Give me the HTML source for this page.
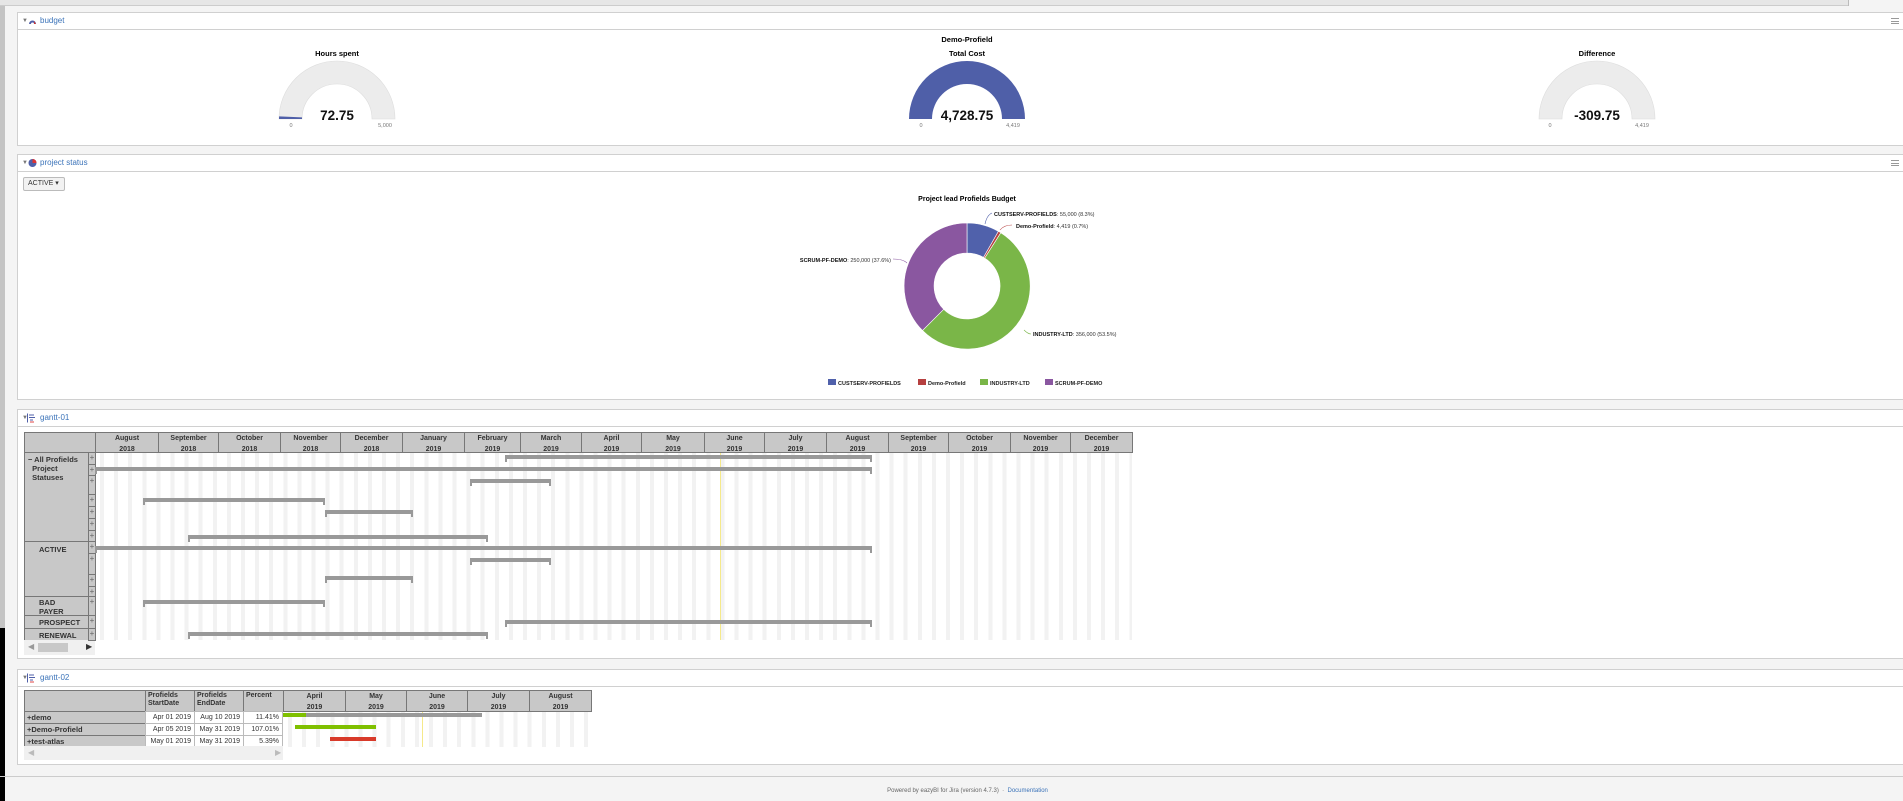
<!DOCTYPE html>
<html><head><meta charset="utf-8"><style>
*{margin:0;padding:0;box-sizing:border-box}
body{width:1903px;height:801px;overflow:hidden;background:#f4f4f4;font-family:"Liberation Sans",Arial,sans-serif;position:relative}
.a{position:absolute}
.panel{position:absolute;left:17px;width:1886px;background:#fff;border:1px solid #d0d0d0;border-right:none}
.ph{position:absolute;left:0;right:0;top:0;height:17px;border-bottom:1px solid #d0d0d0;font-size:8px;color:#3b73b9;line-height:16px;padding-left:22px}
.ph .tri{position:absolute;left:4px;top:0;color:#777;font-size:6px}
.ham{position:absolute;right:4px;top:5px;width:8px;height:6px;border-top:1px solid #999;border-bottom:1px solid #999}
.ham:after{content:"";position:absolute;left:0;right:0;top:1.5px;border-top:1px solid #999}
.hc{position:absolute;background:#c8c8c8;border:1px solid #777;font-size:7px;font-weight:bold;color:#333;text-align:center;line-height:11px}
.lc{position:absolute;background:#c8c8c8;border:1px solid #777;font-size:7.5px;font-weight:bold;color:#333;line-height:9px}
.pl{position:absolute;background:#c8c8c8;border:1px solid #777;font-size:8px;color:#666;text-align:center;line-height:10px}
.bar{position:absolute;height:4px;background:#999}
.dc{position:absolute;background:#fff;border:1px solid #bbb;font-size:7px;color:#333;text-align:right;padding-right:3px;line-height:11px}
</style></head><body>
<div class="a" style="left:0;top:0;width:1903px;height:6px;background:#e6e6e6;border-bottom:1px solid #ccc"></div>
<div class="a" style="left:1848px;top:0;width:55px;height:6px;border-left:1px solid #bbb;background:#f4f4f4"></div>
<div class="a" style="left:0;top:6px;width:5px;height:622px;background:#c4c4c4"></div>
<div class="a" style="left:0;top:628px;width:5px;height:173px;background:#000"></div>

<div class="panel" style="top:12px;height:134px">
<div class="ph"><span class="tri">▼</span><svg class="a" style="left:10px;top:4px" width="9" height="7"><path d="M1 7A3.5 3.5 0 0 1 8 7L6 7A1.5 1.5 0 0 0 3 7Z" fill="#4f5fa8"/><path d="M6 4L8 7H6Z" fill="#c33"/></svg>budget<div class="ham"></div></div>
</div>
<svg class="a" style="left:0;top:0" width="1903" height="150">
<g font-family="Liberation Sans,Arial,sans-serif" font-weight="bold" text-anchor="middle">
<text x="337" y="56" font-size="7.5">Hours spent</text>
<text x="967" y="42" font-size="7.5">Demo-Profield</text>
<text x="967" y="56" font-size="7.5">Total Cost</text>
<text x="1597" y="56" font-size="7.5">Difference</text>
</g>
<path d="M279 119A58 58 0 0 1 395 119L372 119A35 35 0 0 0 302 119Z" fill="#ececec" stroke="#ddd" stroke-width="0.6"/>
<path d="M279 119A58 58 0 0 1 279.1 116.4L302 117.4A35 35 0 0 0 302 119Z" fill="#4f5fa8"/>
<path d="M909 119A58 58 0 0 1 1025 119L1002 119A35 35 0 0 0 932 119Z" fill="#4f5fa8"/>
<path d="M1539 119A58 58 0 0 1 1655 119L1632 119A35 35 0 0 0 1562 119Z" fill="#ececec" stroke="#ddd" stroke-width="0.6"/>
<g font-family="Liberation Sans,Arial,sans-serif" font-weight="bold" text-anchor="middle" font-size="13.5" fill="#111">
<text x="337" y="120">72.75</text><text x="967" y="120">4,728.75</text><text x="1597" y="120">-309.75</text></g>
<g font-family="Liberation Sans,Arial,sans-serif" font-size="5.5" fill="#777" text-anchor="middle">
<text x="291" y="127">0</text><text x="385" y="127">5,000</text>
<text x="921" y="127">0</text><text x="1013" y="127">4,419</text>
<text x="1550" y="127">0</text><text x="1642" y="127">4,419</text></g>
</svg>

<div class="panel" style="top:154px;height:246px">
<div class="ph"><span class="tri">▼</span><svg class="a" style="left:10px;top:3px" width="9" height="10"><circle cx="4.5" cy="5" r="4" fill="#4f5fa8"/><path d="M4.5 5V1A4 4 0 0 1 8.5 5Z" fill="#d33"/></svg>project status<div class="ham"></div></div>
<div class="a" style="left:5px;top:22px;width:42px;height:14px;border:1px solid #bbb;border-radius:2px;background:#f2f2f2;font-size:7px;line-height:12px;padding-left:4px;color:#333">ACTIVE ▾</div>
</div>
<svg class="a" style="left:0;top:150px" width="1903" height="250" viewBox="0 150 1903 250">
<text x="967" y="201" font-family="Liberation Sans,Arial,sans-serif" font-weight="bold" font-size="7" text-anchor="middle">Project lead Profields Budget</text>
<path d="M967 223A63 63 0 0 1 998.4 231.4L983.5 257.4A33 33 0 0 0 967 253Z" fill="#5061ab" stroke="#fff" stroke-width=".6"/>
<path d="M998.4 231.4A63 63 0 0 1 1000.8 232.8L984.7 258.1A33 33 0 0 0 983.5 257.4Z" fill="#b64040" stroke="#fff" stroke-width=".6"/>
<path d="M1000.8 232.8A63 63 0 1 1 922.5 330.5L943.7 309.3A33 33 0 1 0 984.7 258.1Z" fill="#7ab648" stroke="#fff" stroke-width=".6"/>
<path d="M922.5 330.5A63 63 0 0 1 967 223L967 253A33 33 0 0 0 943.7 309.3Z" fill="#8a57a0" stroke="#fff" stroke-width=".6"/>
<g fill="none" stroke-width=".6"><path d="M985 224Q987 215 992 213" stroke="#5061ab"/><path d="M1000 230Q1004 225 1012 225" stroke="#b64040"/><path d="M1024 330Q1028 334 1031 334" stroke="#7ab648"/><path d="M907 263Q903 259 893 259" stroke="#8a57a0"/></g>
<g font-family="Liberation Sans,Arial,sans-serif" font-size="5.5" fill="#333">
<text x="994" y="216"><tspan font-weight="bold" fill="#111">CUSTSERV-PROFIELDS</tspan>: 55,000 (8.3%)</text>
<text x="1016" y="228"><tspan font-weight="bold" fill="#111">Demo-Profield</tspan>: 4,419 (0.7%)</text>
<text x="891" y="262" text-anchor="end"><tspan font-weight="bold" fill="#111">SCRUM-PF-DEMO</tspan>: 250,000 (37.6%)</text>
<text x="1033" y="336"><tspan font-weight="bold" fill="#111">INDUSTRY-LTD</tspan>: 356,000 (53.5%)</text>
</g>
<g font-family="Liberation Sans,Arial,sans-serif" font-size="5.5" font-weight="bold" fill="#222">
<rect x="828" y="379" width="8" height="6" fill="#5061ab"/><text x="838" y="385">CUSTSERV-PROFIELDS</text>
<rect x="918" y="379" width="8" height="6" fill="#b64040"/><text x="928" y="385">Demo-Profield</text>
<rect x="980" y="379" width="8" height="6" fill="#7ab648"/><text x="990" y="385">INDUSTRY-LTD</text>
<rect x="1045" y="379" width="8" height="6" fill="#8a57a0"/><text x="1055" y="385">SCRUM-PF-DEMO</text>
</g>
</svg>

<div class="panel" style="top:409px;height:250px">
<div class="ph"><span class="tri">▼</span><svg class="a" style="left:9px;top:3px" width="9" height="10"><path d="M.5 .5V9.5M2 2H7M2 4.5H8M3 7H6" stroke="#4f5fa8" stroke-width="1" fill="none"/><path d="M3 9H7" stroke="#d44" stroke-width="1"/></svg>gantt-01</div>
</div>
<div class="a" style="left:95px;top:452px;width:1037px;height:188px;background:repeating-linear-gradient(90deg,#fff 0 5px,#f2f2f2 5px 9px,#fff 9px 14.1px)"></div>
<div class="a" style="left:720px;top:452px;width:1px;height:188px;background:#f5e98a"></div>
<div class="hc" style="left:24px;top:432px;width:72px;height:21px"></div>
<div id="m1"></div>
<div class="lc" style="left:24px;top:452px;width:65px;height:90px;padding:2px 0 0 3px">− All Profields<br>&nbsp;&nbsp;Project<br>&nbsp;&nbsp;Statuses</div>
<div class="lc" style="left:24px;top:541px;width:65px;height:56px;padding:3px 0 0 14px">ACTIVE</div>
<div class="lc" style="left:24px;top:596px;width:65px;height:20px;padding:1px 0 0 14px">BAD<br>PAYER</div>
<div class="lc" style="left:24px;top:615px;width:65px;height:14px;padding:2px 0 0 14px">PROSPECT</div>
<div class="lc" style="left:24px;top:628px;width:65px;height:13px;padding:2px 0 0 14px">RENEWAL</div>
<div class="a" style="left:24px;top:640px;width:71px;height:15px;background:#f0f0f0"></div>
<div class="a" style="left:38px;top:643px;width:30px;height:9px;background:#c8c8c8"></div>
<div class="a" style="left:28px;top:642px;font-size:8px;color:#999">◀</div>
<div class="a" style="left:86px;top:642px;font-size:8px;color:#333">▶</div>
<div id="b1"></div>

<div class="panel" style="top:669px;height:96px">
<div class="ph"><span class="tri">▼</span><svg class="a" style="left:9px;top:3px" width="9" height="10"><path d="M.5 .5V9.5M2 2H7M2 4.5H8M3 7H6" stroke="#4f5fa8" stroke-width="1" fill="none"/><path d="M3 9H7" stroke="#d44" stroke-width="1"/></svg>gantt-02</div>
</div>
<div class="a" style="left:283px;top:711px;width:308px;height:36px;background:repeating-linear-gradient(90deg,#fff 0 5px,#f2f2f2 5px 9px,#fff 9px 14.1px)"></div>
<div class="a" style="left:422px;top:711px;width:1px;height:36px;background:#f5e98a"></div>
<div class="hc" style="left:24px;top:690px;width:122px;height:22px"></div>
<div class="hc" style="left:145px;top:690px;width:50px;height:22px;text-align:left;padding:1px 2px;line-height:8px">Profields<br>StartDate</div>
<div class="hc" style="left:194px;top:690px;width:50px;height:22px;text-align:left;padding:1px 2px;line-height:8px">Profields<br>EndDate</div>
<div class="hc" style="left:243px;top:690px;width:41px;height:22px;text-align:left;padding:1px 2px;line-height:8px">Percent</div>
<div id="m2"></div>
<div class="lc" style="left:24px;top:711px;width:122px;height:13px;padding:1px 2px">+demo</div>
<div class="lc" style="left:24px;top:723px;width:122px;height:13px;padding:1px 2px">+Demo-Profield</div>
<div class="lc" style="left:24px;top:735px;width:122px;height:12px;padding:1px 2px">+test-atlas</div>
<div class="dc" style="left:145px;top:711px;width:50px;height:13px">Apr 01 2019</div>
<div class="dc" style="left:194px;top:711px;width:50px;height:13px">Aug 10 2019</div>
<div class="dc" style="left:243px;top:711px;width:40px;height:13px">11.41%</div>
<div class="dc" style="left:145px;top:723px;width:50px;height:13px">Apr 05 2019</div>
<div class="dc" style="left:194px;top:723px;width:50px;height:13px">May 31 2019</div>
<div class="dc" style="left:243px;top:723px;width:40px;height:13px">107.01%</div>
<div class="dc" style="left:145px;top:735px;width:50px;height:12px">May 01 2019</div>
<div class="dc" style="left:194px;top:735px;width:50px;height:12px">May 31 2019</div>
<div class="dc" style="left:243px;top:735px;width:40px;height:12px">5.39%</div>
<div class="a" style="left:24px;top:746px;width:259px;height:14px;background:#f0f0f0"></div>
<div class="a" style="left:28px;top:748px;font-size:8px;color:#bbb">◀</div>
<div class="a" style="left:275px;top:748px;font-size:8px;color:#bbb">▶</div>
<div class="bar" style="left:283px;top:713px;width:23px;background:#7fc000"></div>
<div class="bar" style="left:306px;top:713px;width:176px"></div>
<div class="bar" style="left:295px;top:725px;width:81px;background:#7fc000"></div>
<div class="bar" style="left:330px;top:737px;width:46px;background:#d83a2a"></div>

<div class="a" style="left:0;top:776px;width:1903px;border-top:1px solid #ccc"></div>
<div class="a" style="left:0;top:788px;width:1903px;text-align:center;font-size:6px;color:#666;padding-left:32px">Powered by eazyBI for Jira (version 4.7.3) &nbsp;·&nbsp; <span style="color:#3b73b9">Documentation</span></div>

<script>
var ms=["August","September","October","November","December","January","February","March","April","May","June","July","August","September","October","November","December"];
var xs=[95,158,218,280,340,402,464,520,581,641,704,764,826,888,948,1010,1070,1132];
var h="";for(var i=0;i<ms.length;i++){h+='<div class="hc" style="left:'+xs[i]+'px;top:432px;width:'+(xs[i+1]-xs[i]+1)+'px;height:21px;padding-top:0">'+ms[i]+'<br>'+(i<5?2018:2019)+'</div>';}
document.getElementById("m1").outerHTML=h;
var m2=["April","May","June","July","August"],x2=[283,345,406,467,529,591];h="";
for(i=0;i<5;i++)h+='<div class="hc" style="left:'+x2[i]+'px;top:690px;width:'+(x2[i+1]-x2[i]+1)+'px;height:22px">'+m2[i]+'<br>2019</div>';
document.getElementById("m2").outerHTML=h;
var pl=[452,464,475,494,506,518,530,541,553,574,586,596,615,628];h="";
var ph=[13,12,20,13,13,13,12,13,22,13,11,20,14,13];
for(i=0;i<pl.length;i++)h+='<div class="pl" style="left:88px;top:'+pl[i]+'px;width:8px;height:'+ph[i]+'px">+</div>';
var bars=[[455,505,872],[467,95,872],[479,470,551],[498,143,325],[510,325,413],[535,188,488],[546,95,872],[558,470,551],[576,325,413],[600,143,325],[620,505,872],[632,188,488]];
for(i=0;i<bars.length;i++){var b=bars[i];h+='<div class="bar" style="left:'+b[1]+'px;top:'+b[0]+'px;width:'+(b[2]-b[1])+'px"></div><div class="a" style="left:'+b[1]+'px;top:'+(b[0]+4)+'px;width:2px;height:3px;background:#999"></div><div class="a" style="left:'+(b[2]-2)+'px;top:'+(b[0]+4)+'px;width:2px;height:3px;background:#999"></div>';}
document.getElementById("b1").outerHTML=h;
</script>
</body></html>
